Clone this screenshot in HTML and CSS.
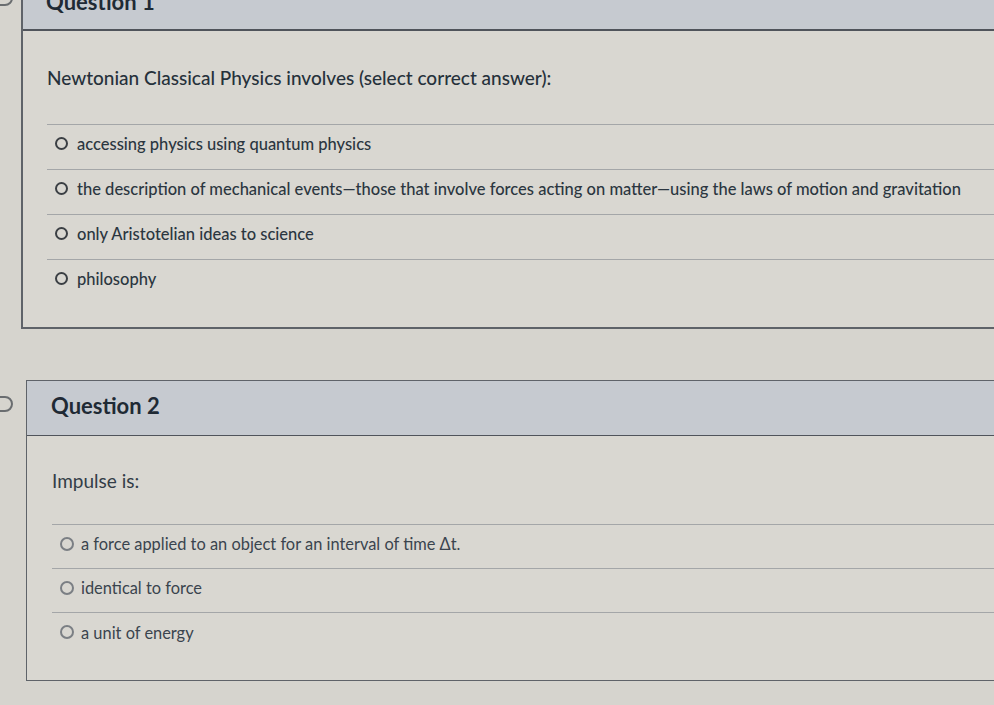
FILE: index.html
```html
<!DOCTYPE html>
<html lang="en">
<head>
<meta charset="utf-8">
<title>Quiz</title>
<link rel="stylesheet" href="styles.css">
</head>
<body>
<div class="page">
  <section class="question q1">
    <div class="gutter">
      <svg class="flag" width="22" height="20" viewBox="0 0 22 20"><path d="M0 3 H13 A7 7 0 0 1 13 17 H0" fill="none" stroke="#6a6d70" stroke-width="2"/></svg>
    </div>
    <div class="card">
      <header class="card-head"><h2>Question 1</h2></header>
      <div class="card-body">
        <p class="prompt">Newtonian Classical Physics involves (select correct answer):</p>
        <ul class="answers">
          <li><span class="radio"></span>accessing physics using quantum physics</li>
          <li><span class="radio"></span>the description of mechanical events—those that involve forces acting on matter—using the laws of motion and gravitation</li>
          <li><span class="radio"></span>only Aristotelian ideas to science</li>
          <li><span class="radio"></span>philosophy</li>
        </ul>
      </div>
    </div>
  </section>

  <section class="question q2">
    <div class="gutter">
      <svg class="flag" width="22" height="20" viewBox="0 0 22 20"><path d="M0 3 H13 A7 7 0 0 1 13 17 H0" fill="none" stroke="#6a6d70" stroke-width="2"/></svg>
    </div>
    <div class="card">
      <header class="card-head"><h2>Question 2</h2></header>
      <div class="card-body">
        <p class="prompt">Impulse is:</p>
        <ul class="answers">
          <li><span class="radio"></span>a force applied to an object for an interval of time Δt.</li>
          <li><span class="radio"></span>identical to force</li>
          <li><span class="radio"></span>a unit of energy</li>
        </ul>
      </div>
    </div>
  </section>
</div>
</body>
</html>
```

FILE: styles.css
```css
html, body {
  margin: 0;
  padding: 0;
}
body {
  background: #d6d4ce;
  font-family: Lato, "Open Sans", "Liberation Sans", sans-serif;
  color: #2b3640;
  overflow: hidden;
  width: 994px;
  height: 705px;
}
.page {
  margin-top: -26px;
  display: flex;
  flex-direction: column;
  gap: 51px;
}
.question {
  display: flex;
  margin-right: -30px;
}
.gutter {
  flex: none;
  width: 21px;
  display: flex;
  align-items: flex-start;
}
.q2 .gutter {
  width: 26px;
}
.flag {
  display: block;
  margin-left: -8px;
  margin-top: 14px;
}
.card {
  flex: 1;
  background: #d9d7d1;
  border: 2px solid #5f6369;
  border-right: none;
}
.q1 .card {
  border-top: none;
}
.card-head {
  background: #c6cad0;
  border-bottom: 2px solid #50545b;
  height: 55px;
  display: flex;
  align-items: center;
  padding-left: 23px;
}
.card-head h2 {
  margin: 0;
  font-size: 22px;
  font-weight: 700;
  color: #1f2a35;
}
.card-body {
  padding: 35px 0 0 24px;
}
.prompt {
  margin: 0 0 34px;
  line-height: 24px;
  font-size: 19px;
  font-weight: 500;
  color: #26313b;
}
.answers {
  list-style: none;
  margin: 0;
  padding: 0;
  border-top: 1px solid #a4a6a8;
}
.answers li {
  display: flex;
  align-items: center;
  height: 45px;
  padding-bottom: 7px;
  box-sizing: border-box;
  border-bottom: 1px solid #a4a6a8;
  padding-left: 8px;
  font-size: 16.5px;
  font-weight: 500;
  color: #2b3640;
  white-space: nowrap;
}
.answers li:last-child {
  border-bottom: none;
  height: 67px;
  padding-bottom: 30px;
}
.radio {
  flex: none;
  width: 13px;
  height: 13px;
  border: 2px solid #3b3f44;
  border-radius: 50%;
  box-sizing: border-box;
  margin-right: 9px;
}
.q2 .card {
  border-width: 1.5px;
}
.q2 .card-head {
  border-bottom-width: 1.5px;
  padding-left: 24px;
  padding-bottom: 5px;
  box-sizing: border-box;
}
.q2 .card-body {
  padding-left: 25px;
  padding-top: 35px;
}
.q2 .prompt {
  font-size: 19px;
  line-height: 20px;
  margin-bottom: 33px;
  color: #333d47;
  font-weight: 400;
}
.q2 .answers li {
  height: 44px;
  padding-left: 8px;
  padding-bottom: 6px;
  font-size: 16.4px;
  font-weight: 400;
  color: #3a444e;
}
.q2 .answers li:last-child {
  height: 67px;
  padding-bottom: 29px;
}
.q2 .radio {
  border-color: #7b7f84;
  width: 14px;
  height: 14px;
  margin-right: 7px;
}
```
